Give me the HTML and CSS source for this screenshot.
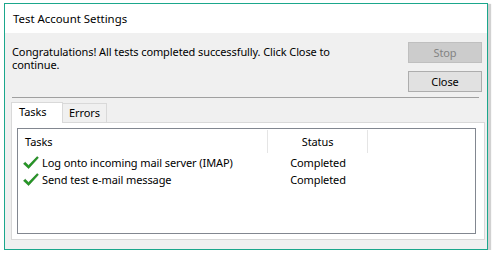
FILE: index.html
```html
<!DOCTYPE html>
<html>
<head>
<meta charset="utf-8">
<link rel="stylesheet" href="styles.css">
</head>
<body>
<div class="window">
  <div class="titlebar">Test Account Settings</div>
  <div class="body">
    <div class="top">
      <div class="msg">Congratulations! All tests completed successfully. Click Close to continue.</div>
      <div class="buttons">
        <div class="btn disabled">Stop</div>
        <div class="btn">Close</div>
      </div>
    </div>
    <div class="sep"></div>
    <div class="tabs">
      <div class="tab active">Tasks</div>
      <div class="tab">Errors</div>
    </div>
    <div class="panel">
      <div class="listbox">
        <div class="row header">
          <div class="col-task">Tasks</div>
          <div class="col-status">Status</div>
          <div class="col-rest"></div>
        </div>
        <div class="row item">
          <div class="col-task">
            <svg class="check" width="16" height="14" viewBox="0 0 16 14"><path d="M0.5 7.8 L2.3 6.2 L5.5 9.4 L14.2 0.6 L15.4 1.8 L5.6 12.6 Z" fill="#239a23" stroke="#106010" stroke-width="0.5" stroke-linejoin="round"/></svg>
            <span>Log onto incoming mail server (IMAP)</span>
          </div>
          <div class="col-status">Completed</div>
        </div>
        <div class="row item">
          <div class="col-task">
            <svg class="check" width="16" height="14" viewBox="0 0 16 14"><path d="M0.5 7.8 L2.3 6.2 L5.5 9.4 L14.2 0.6 L15.4 1.8 L5.6 12.6 Z" fill="#239a23" stroke="#106010" stroke-width="0.5" stroke-linejoin="round"/></svg>
            <span>Send test e-mail message</span>
          </div>
          <div class="col-status">Completed</div>
        </div>
      </div>
    </div>
  </div>
</div>
</body>
</html>
```
FILE: styles.css
```css
html, body {
  margin: 0;
  padding: 0;
  background: #ffffff;
}
body {
  font-family: "Noto Sans", "DejaVu Sans", sans-serif;
  font-size: 11px;
  letter-spacing: -0.1px;
  color: #000;
}
.window {
  margin: 3px 0 0 4px;
  width: 482px;
  height: 245px;
  border: 1px solid #1ba78c;
  box-shadow: 2px 2px 1px 1px rgba(0,0,0,0.18);
  background: #f0f0f0;
  display: flex;
  flex-direction: column;
}
.titlebar {
  height: 29px;
  line-height: 29px;
  background: #fff;
  padding-left: 8px;
  font-size: 11.4px;
  letter-spacing: 0;
}
.body {
  flex: 1;
  background: #f0f0f0;
  padding: 0 5px 0 6px;
  display: flex;
  flex-direction: column;
}
.top {
  display: flex;
  justify-content: space-between;
  padding-top: 9px;
}
.msg {
  margin-top: 3px;
  padding-left: 1px;
  width: 340px;
  line-height: 13px;
}
.buttons {
  display: flex;
  flex-direction: column;
  gap: 8px;
}
.btn {
  width: 72px;
  height: 19px;
  line-height: 19px;
  text-align: center;
  background: #e1e1e1;
  border: 1px solid #adadad;
}
.btn.disabled {
  background: #cccccc;
  border-color: #bfbfbf;
  color: #838383;
}
.sep {
  margin: 5px 0 0 1px;
  width: 467px;
  height: 1px;
  background: #a0a0a0;
}
.tabs {
  display: flex;
  align-items: flex-end;
  margin: 4px 0 0 0;
  height: 20px;
  position: relative;
  z-index: 1;
}
.tab {
  height: 18px;
  line-height: 18px;
  padding: 0 6px 0 6px;
  border: 1px solid #d9d9d9;
  border-bottom: none;
  border-left: none;
  background: #f0f0f0;
}
.tab.active {
  height: 20px;
  line-height: 18px;
  width: 43px;
  padding: 0 0 0 7px;
  border-left: 1px solid #d9d9d9;
  background: #fff;
  margin-bottom: -1px;
}
.panel {
  width: 467px;
  height: 111px;
  border: 1px solid #d9d9d9;
  background: #fff;
  padding: 5px 0 0 5px;
}
.listbox {
  width: 457px;
  height: 104px;
  border: 1px solid #828790;
  background: #fff;
}
.row {
  display: flex;
}
.header {
  height: 25px;
}
.header .col-task,
.header .col-status {
  border-right: 1px solid #e5e5e5;
  margin-top: 1px;
  line-height: 23px;
  height: 23px;
}
.header .col-task {
  padding-left: 7px;
}
.col-task {
  width: 250px;
  box-sizing: border-box;
  display: flex;
  align-items: center;
  padding-left: 5px;
}
.col-status {
  width: 100px;
  text-align: center;
  box-sizing: border-box;
}
.item {
  height: 17px;
  line-height: 17px;
}
.check {
  display: block;
  margin-right: 3px;
}
```
